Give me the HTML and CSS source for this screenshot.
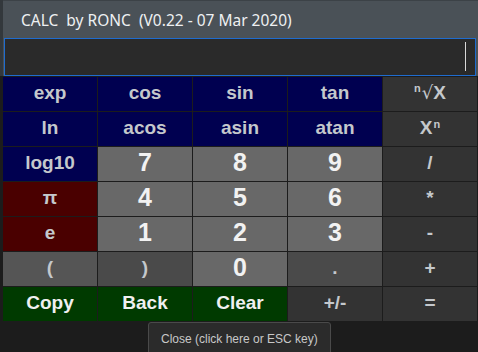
FILE: index.html
```html
<!DOCTYPE html>
<html>
<head>
<meta charset="utf-8">
<link rel="stylesheet" href="styles.css">
</head>
<body>
<div class="window">
  <div class="top">
    <div class="titlebar"><span class="title">CALC  by RONC  (V0.22 - 07 Mar 2020)</span></div>
    <div class="display"><span class="cursor"></span></div>
  </div>
  <div class="keys">
    <div class="key fn">exp</div>
    <div class="key fn">cos</div>
    <div class="key fn">sin</div>
    <div class="key fn">tan</div>
    <div class="key op"><span class="sup">n</span><span class="root">√</span>X</div>

    <div class="key fn">ln</div>
    <div class="key fn">acos</div>
    <div class="key fn">asin</div>
    <div class="key fn">atan</div>
    <div class="key op">X<span class="sup sup2">n</span></div>

    <div class="key fn">log10</div>
    <div class="key dig">7</div>
    <div class="key dig">8</div>
    <div class="key dig">9</div>
    <div class="key op">/</div>

    <div class="key const">π</div>
    <div class="key dig">4</div>
    <div class="key dig">5</div>
    <div class="key dig">6</div>
    <div class="key op star">*</div>

    <div class="key const">e</div>
    <div class="key dig">1</div>
    <div class="key dig">2</div>
    <div class="key dig">3</div>
    <div class="key op">-</div>

    <div class="key paren-l">(</div>
    <div class="key paren-r">)</div>
    <div class="key dig">0</div>
    <div class="key dot">.</div>
    <div class="key op">+</div>

    <div class="key act">Copy</div>
    <div class="key act">Back</div>
    <div class="key act">Clear</div>
    <div class="key op">+/-</div>
    <div class="key op">=</div>
  </div>
  <div class="tooltip">Close (click here or ESC key)</div>
</div>
</body>
</html>
```
FILE: styles.css
```css
html, body {
  margin: 0;
  padding: 0;
  background: #1c1c1c;
}
.window {
  position: relative;
  width: 478px;
  height: 352px;
  overflow: hidden;
  background: #1c1c1c;
  font-family: "Liberation Sans", Arial, sans-serif;
}
.top {
  height: 76px;
  background: #4a5157;
  border-left: 3px solid #33383c;
  box-sizing: border-box;
  display: flex;
  flex-direction: column;
}
.titlebar {
  height: 37px;
  box-sizing: border-box;
  border-top: 1px solid #3c4247;
  padding-left: 18px;
  display: flex;
  align-items: center;
}
.title {
  white-space: pre;
  color: #eef0f2;
  font-family: "Noto Sans", "Open Sans", sans-serif;
  font-size: 15.5px;
  padding-top: 1px;
}
.display {
  position: relative;
  margin: 1px 2px 0 1px;
  height: 38px;
  box-sizing: border-box;
  border: 1px solid #1f6ccf;
  background: #2a2a2a;
}
.cursor {
  position: absolute;
  right: 9px;
  top: 3px;
  width: 1px;
  height: 29px;
  background: #d8d8d8;
}
.keys {
  margin-left: 3px;
  width: 474px;
  padding-top: 1px;
  display: grid;
  grid-template-columns: repeat(5, 1fr);
  grid-auto-rows: 34px;
  gap: 1px;
  background: #1c1c1c;
}
.key {
  display: flex;
  align-items: center;
  justify-content: center;
  box-sizing: border-box;
  padding-bottom: 3px;
  font-weight: bold;
  font-size: 19px;
  color: #c4c8cc;
}
.fn { background: #000050; }
.const { background: #4a0000; }
.dig {
  background: #686868;
  color: #f2f2f2;
  font-size: 25px;
  padding-bottom: 4px;
}
.op { background: #333333; }
.paren-l { background: #555555; }
.paren-r, .dot { background: #4a4a4a; }
.act {
  background: #003a00;
  color: #f0f0f0;
}
.star { align-items: flex-start; padding-top: 5px; }
.sup {
  font-size: 11px;
  position: relative;
  top: -5px;
  margin-right: 1px;
}
.sup2 { margin-left: 1px; margin-right: 0; top: -4px; }
.root {
  font-weight: normal;
  font-family: "DejaVu Sans", sans-serif;
  font-size: 18px;
}
.tooltip {
  position: absolute;
  left: 148px;
  top: 322px;
  width: 183px;
  height: 34px;
  box-sizing: border-box;
  background: #2b2b2b;
  border: 1px solid #4a4a4a;
  border-radius: 3px;
  color: #c8c8c8;
  font-family: "Liberation Sans", Arial, sans-serif;
  font-size: 12px;
  white-space: nowrap;
  padding: 9px 0 0 12px;
}
```
